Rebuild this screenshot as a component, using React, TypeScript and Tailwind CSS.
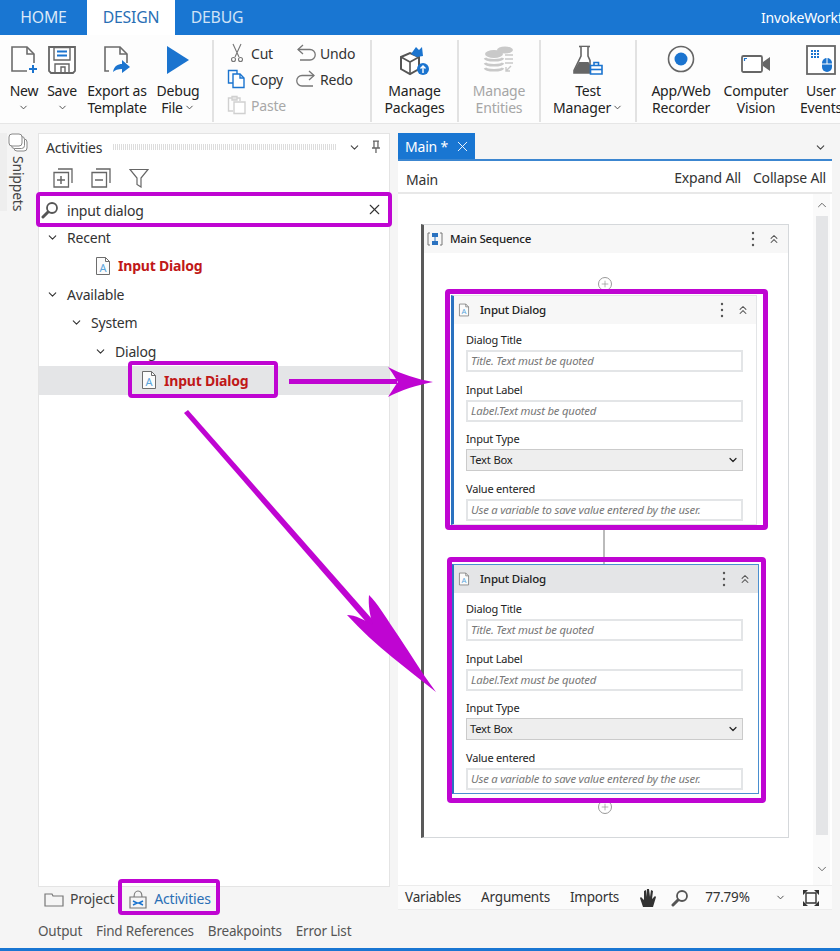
import React from 'react';
import { ChevronDown, ChevronUp, ChevronsUp, Plus, X } from 'lucide-react';

const MAGENTA = 'border-[#bf05d2]';

// Small magenta annotation frame that sits over whatever it is placed in
const Frame = ({ className }: { className: string }) => (
  <div className={`absolute border-solid ${MAGENTA} rounded-[4px] pointer-events-none z-20 ${className}`} />
);

const Chev = ({ className = '' }: { className?: string }) => (
  <ChevronDown className={`w-[11px] h-[11px] text-[#444] ${className}`} strokeWidth={2} />
);

const DocIcon = ({ size = 20 }: { size?: number }) => (
  <svg width={size} height={size} viewBox="0 0 20 20" fill="none">
    <path d="M3.5 1.5h9l4 4v13h-13z" fill="#fbfbfb" stroke="#6d6d6d" />
    <path d="M12.5 1.5v4h4" stroke="#6d6d6d" />
    <text x="10" y="15.5" textAnchor="middle" fontSize="11" fontFamily="Noto Sans" fill="#5aa5dc">A</text>
  </svg>
);

const NewIcon = () => (
  <svg width="30" height="30" viewBox="0 0 30 30" fill="none">
    <path d="M18 26H3V2h15l7 7v9" stroke="#6b6b6b" strokeWidth="1.6" />
    <path d="M18 2v7h7" stroke="#6b6b6b" strokeWidth="1.6" />
    <path d="M24 20v8M20 24h8" stroke="#1b74cf" strokeWidth="2" />
  </svg>
);

const SaveIcon = () => (
  <svg width="30" height="30" viewBox="0 0 30 30" fill="none">
    <path d="M2 2h26v24l-2 2H4l-2-2z" fill="#fff" stroke="#666" strokeWidth="1.8" />
    <path d="M7 2.5h16V15H7z" stroke="#666" strokeWidth="1.4" />
    <path d="M10 6.5h10M10 10.5h10" stroke="#1b74cf" strokeWidth="2" />
    <path d="M8 28v-9h14v9M14 22h4v6h-4z" stroke="#666" strokeWidth="1.4" />
  </svg>
);

const ExportIcon = () => (
  <svg width="30" height="30" viewBox="0 0 30 30" fill="none">
    <path d="M7 26H3V2h15l7 7v9" stroke="#6b6b6b" strokeWidth="1.6" />
    <path d="M18 2v7h7" stroke="#6b6b6b" strokeWidth="1.6" />
    <path d="M11 27c1-6 5-8 9-8v-4l8 7-8 6v-4c-4 0-7 1-9 3z" fill="#1b74cf" />
  </svg>
);

const ScissorsIcon = () => (
  <svg width="20" height="20" viewBox="0 0 20 20" fill="none" stroke="#777" strokeWidth="1.1">
    <path d="M6 1l6 13M14 1L8 14" />
    <circle cx="6.5" cy="16.5" r="2" />
    <circle cx="13.5" cy="16.5" r="2" />
  </svg>
);

const CopyIcon = () => (
  <svg width="20" height="20" viewBox="0 0 20 20" fill="none" stroke="#1b74cf" strokeWidth="1.4">
    <path d="M6 14H1.5V1.5H10V5" />
    <path d="M6 5h7l4 4v9.5H6z" fill="#fff" />
    <path d="M13 5v4h4" />
  </svg>
);

const PasteIcon = () => (
  <svg width="20" height="20" viewBox="0 0 20 20" fill="none" stroke="#d0d0d0" strokeWidth="1.4">
    <path d="M6 16H1.5V3H13v3" />
    <path d="M5 1.5h5V5H5z" fill="#e6e6e6" />
    <path d="M7 7h11v11.5H7z" fill="#fff" />
  </svg>
);

const UndoIcon = () => (
  <svg width="20" height="18" viewBox="0 0 20 18" fill="none" stroke="#777" strokeWidth="1.3">
    <path d="M7 1L2 5.5 7 10" />
    <path d="M2 5.5h12a4.5 4.5 0 0 1 0 10.5H4" />
  </svg>
);

const RedoIcon = () => (
  <svg width="20" height="18" viewBox="0 0 20 18" fill="none" stroke="#777" strokeWidth="1.3">
    <path d="M13 1l5 4.5-5 4.5" />
    <path d="M18 5.5H6a4.5 4.5 0 0 0 0 10.5h11" />
  </svg>
);

const PackagesIcon = () => (
  <svg width="32" height="32" viewBox="0 0 32 32" fill="none">
    <path d="M2 12l9-4 9 4v12l-9 5-9-5z" fill="#fff" stroke="#555" strokeWidth="2" />
    <path d="M2 12l9 5 9-5M11 17v12" stroke="#555" strokeWidth="1.6" />
    <path d="M12 9l5-7 3 3 3-3 1 9-6 1z" fill="#1b74cf" />
    <circle cx="24" cy="24" r="6" fill="#1b74cf" />
    <path d="M24 28v-7M21.5 23.5L24 21l2.5 2.5" stroke="#fff" strokeWidth="1.4" />
  </svg>
);

const EntitiesIcon = () => (
  <svg width="32" height="32" viewBox="0 0 32 32" fill="none">
    <ellipse cx="22" cy="5" rx="8" ry="3.5" fill="#c9c9c9" />
    <path d="M22 10h8M22 14h8M22 18h8" stroke="#c9c9c9" strokeWidth="1.6" />
    <ellipse cx="11" cy="9" rx="9" ry="4" fill="#c9c9c9" />
    <path d="M2 13c1 3 17 3 18 0M2 18c1 3 17 3 18 0M2 23c1 3 17 3 18 0" stroke="#c9c9c9" strokeWidth="2.6" />
    <path d="M28 21l-5 5M23 22v4h4" stroke="#c9c9c9" strokeWidth="1.4" />
  </svg>
);

const FlaskIcon = () => (
  <svg width="30" height="30" viewBox="0 0 30 30" fill="none">
    <path d="M6 1.5h11" stroke="#666" strokeWidth="1.6" />
    <path d="M8 2v9L1 25.5V28h16V15.5L15 11V2" stroke="#666" strokeWidth="1.6" fill="#fff" />
    <path d="M6 17h9.5L17 20v8H1v-2.500z" fill="#666" />
    <path d="M17.500 20.500h11.500V29H17.500zM21 20v-2.500h4.500V20" fill="#fff" stroke="#1b74cf" strokeWidth="1.6" />
    <path d="M18 24.500h11" stroke="#1b74cf" strokeWidth="1.6" />
  </svg>
);

const RecordIcon = () => (
  <svg width="28" height="28" viewBox="0 0 28 28" fill="none">
    <circle cx="14" cy="14" r="12.500" stroke="#666" strokeWidth="1.600" />
    <circle cx="14" cy="14" r="6.500" fill="#1b74cf" />
  </svg>
);

const CameraIcon = () => (
  <svg width="30" height="20" viewBox="0 0 30 20" fill="none" className="mt-[9px]">
    <rect x="1" y="2" width="20" height="16" rx="1.500" fill="#fff" stroke="#666" strokeWidth="1.800" />
    <path d="M3.500 7V4.500H6" stroke="#1b74cf" strokeWidth="1.200" />
    <path d="M22 8l7-5v14l-7-5z" fill="#666" />
  </svg>
);

const UserEventsIcon = () => (
  <svg width="30" height="30" viewBox="0 0 30 30" fill="none">
    <rect x="1" y="1" width="28" height="28" fill="#fff" stroke="#666" strokeWidth="1.800" />
    <path d="M5 6h9M5 9h9M5 12h9" stroke="#1b74cf" strokeWidth="2" strokeDasharray="2 1" />
    <rect x="16" y="13" width="10" height="14" rx="5" fill="#1b74cf" />
    <path d="M16 19h10M21 13v6" stroke="#fff" strokeWidth="1" />
  </svg>
);

const ExpandIcon = ({ minus = false }: { minus?: boolean }) => (
  <svg width="20" height="20" viewBox="0 0 20 20" fill="none" stroke="#666" strokeWidth="1.300">
    <path d="M5 1h14v14" />
    <path d="M1 4.500h14.500V19H1z" fill="#fff" />
    <path d="M4 12h8" strokeWidth="1.500" />
    {!minus && <path d="M8 8v8" strokeWidth="1.500" />}
  </svg>
);

const SearchIcon = ({ className = '' }: { className?: string }) => (
  <svg width="18" height="18" viewBox="0 0 18 18" fill="none" className={className}>
    <circle cx="11" cy="7" r="5" stroke="#555" strokeWidth="1.800" />
    <path d="M7 11l-5 5" stroke="#555" strokeWidth="3" strokeLinecap="round" />
  </svg>
);

const RibbonButton = ({
  icon,
  lines,
  width,
  muted,
  menu,
  menuInline,
}: {
  icon: React.ReactNode;
  lines: string[];
  width: string;
  muted?: boolean;
  menu?: boolean;
  menuInline?: boolean;
}) => (
  <div className={`flex flex-col items-center shrink-0 pt-[6px] ${width}`}>
    <div className="h-[41px] flex items-start justify-center pt-[4px]">{icon}</div>
    <div className={`text-[14px] leading-[17px] text-center tracking-[-0.2px] whitespace-nowrap ${muted ? 'text-[#a6a6a6]' : 'text-[#222]'}`}>
      {lines.map((line, i) => (
        <div key={line} className="flex items-center justify-center gap-px">
          {line}
          {menuInline && i === lines.length - 1 && <Chev />}
        </div>
      ))}
      {menu && (
        <div className="h-[17px] flex items-center justify-center">
          <Chev />
        </div>
      )}
    </div>
  </div>
);

const RibbonSep = () => <div className="w-[2px] h-[82px] mt-[5px] bg-[#e2e2e2] shrink-0" />;

const SmallAction = ({ icon, label, muted }: { icon: React.ReactNode; label: string; muted?: boolean }) => (
  <div className={`h-[26px] flex items-center gap-[4px] text-[14px] tracking-[-0.2px] ${muted ? 'text-[#a8a8a8]' : 'text-[#333]'}`}>
    <span className="w-[20px] flex justify-center">{icon}</span>
    {label}
  </div>
);

const Ribbon = () => (
  <div className="h-[89px] bg-[#fdfdfd] border-b border-[#e6e6e6] flex shrink-0 overflow-hidden pl-[5px]">
    <RibbonButton icon={<NewIcon />} lines={['New']} width="w-[38px]" menu />
    <RibbonButton icon={<SaveIcon />} lines={['Save']} width="w-[38px]" menu />
    <RibbonButton icon={<ExportIcon />} lines={['Export as', 'Template']} width="w-[72px]" />
    <RibbonButton
      icon={<svg width="24" height="30" viewBox="0 0 24 30"><path d="M1 1l22 14L1 29z" fill="#1b74cf" /></svg>}
      lines={['Debug', 'File']}
      width="w-[50px]"
      menuInline
    />
    <div className="w-[9px] shrink-0" />
    <RibbonSep />
    <div className="w-[156px] shrink-0 flex pl-[13px] pt-[5px]">
      <div className="w-[69px]">
        <SmallAction icon={<ScissorsIcon />} label="Cut" />
        <SmallAction icon={<CopyIcon />} label="Copy" />
        <SmallAction icon={<PasteIcon />} label="Paste" muted />
      </div>
      <div>
        <SmallAction icon={<UndoIcon />} label="Undo" />
        <SmallAction icon={<RedoIcon />} label="Redo" />
      </div>
    </div>
    <RibbonSep />
    <RibbonButton icon={<PackagesIcon />} lines={['Manage', 'Packages']} width="w-[85px]" />
    <RibbonSep />
    <RibbonButton icon={<EntitiesIcon />} lines={['Manage', 'Entities']} width="w-[80px]" muted />
    <RibbonSep />
    <RibbonButton icon={<FlaskIcon />} lines={['Test', 'Manager']} width="w-[94px]" menuInline />
    <RibbonSep />
    <RibbonButton icon={<RecordIcon />} lines={['App/Web', 'Recorder']} width="w-[88px]" />
    <RibbonButton icon={<CameraIcon />} lines={['Computer', 'Vision']} width="w-[62px]" />
    <RibbonButton icon={<UserEventsIcon />} lines={['User', 'Events']} width="w-[68px]" />
  </div>
);

const TreeRow = ({ indent, label }: { indent: string; label: string }) => (
  <div className={`h-[28.500px] flex items-center text-[14px] tracking-[-0.2px] text-[#333] ${indent}`}>
    <ChevronDown className="w-[13px] h-[13px] text-[#333] mr-[8px]" strokeWidth={2} />
    {label}
  </div>
);

const ActivitiesPanel = () => (
  <div className="w-[352px] h-[754px] bg-white border border-[#e4e4e4] shrink-0 flex flex-col">
    <div className="h-[26px] flex items-center pl-[7px] pr-[7px] text-[14px] tracking-[-0.2px] text-[#333]">
      Activities
      <div className="ml-[11px] w-[225px] h-[6px] bg-[repeating-linear-gradient(90deg,#dddddd_0_1px,transparent_1px_2px)]" />
      <Chev className="ml-[11px] w-[13px] h-[13px]" />
      <svg width="12" height="14" viewBox="0 0 12 14" fill="none" stroke="#666" strokeWidth="1.300" className="ml-[9px]">
        <path d="M3 1h6M4 1v7M8 1v7M2 8h8M6 8v5" />
      </svg>
    </div>
    <div className="h-[36px] flex items-center pl-[14px] gap-[18px]">
      <ExpandIcon />
      <ExpandIcon minus />
      <svg width="20" height="20" viewBox="0 0 20 20" fill="none" stroke="#666" strokeWidth="1.200">
        <path d="M1 1.500h18l-7 8.500v9l-4-2.500V10z" />
      </svg>
    </div>
    <div className="relative h-[27px] flex items-center pl-[28px] pr-[6px] text-[14px] tracking-[-0.2px] text-[#333]">
      <SearchIcon className="absolute left-[2px] top-[5px]" />
      <span className="mt-[2px]">input dialog</span>
      <X className="ml-auto w-[17px] h-[17px] text-[#333]" strokeWidth={1.500} />
      <Frame className="border-[4px] -inset-x-[3px] -inset-y-[4px]" />
    </div>
    <TreeRow indent="pl-[7px]" label="Recent" />
    <div className="h-[28.500px] flex items-center pl-[54px] gap-[5px]">
      <DocIcon />
      <span className="text-[14px] font-bold tracking-[-0.2px] text-[#c01818]">Input Dialog</span>
    </div>
    <TreeRow indent="pl-[7px]" label="Available" />
    <TreeRow indent="pl-[31px]" label="System" />
    <TreeRow indent="pl-[55px]" label="Dialog" />
    <div className="h-[29px] bg-[#e4e5e7] flex items-center pl-[100px]">
      <div className="relative flex items-center gap-[5px]">
        <DocIcon />
        <span className="text-[14px] font-bold tracking-[-0.2px] text-[#c01818]">Input Dialog</span>
        <Frame className="border-[4px] -left-[11px] -right-[30px] -top-[9px] -bottom-[7px]" />
      </div>
    </div>
  </div>
);

const Field = ({ label, placeholder }: { label: string; placeholder: string }) => (
  <div className="mb-[8.500px]">
    <div className="h-[18px] leading-[18px] text-[11px] tracking-[-0.2px] text-[#222]">{label}</div>
    <div className="mt-px h-[22px] leading-[18px] border-2 border-[#e3e5e7] pl-[3px] text-[11.300px] italic tracking-[-0.2px] text-[#777] bg-white whitespace-nowrap">
      {placeholder}
    </div>
  </div>
);

const TypeField = () => (
  <div className="mb-[8.500px]">
    <div className="h-[18px] leading-[18px] text-[11px] tracking-[-0.2px] text-[#222]">Input Type</div>
    <div className="mt-px h-[22px] border border-[#cbcbcb] bg-[#eeeeee] pl-[3px] pr-[3px] flex items-center justify-between text-[11.200px] tracking-[-0.2px] text-[#222]">
      Text Box
      <ChevronDown className="w-[12px] h-[12px] text-[#222]" strokeWidth={2.400} />
    </div>
  </div>
);

const Dots = () => (
  <svg width="4" height="16" viewBox="0 0 4 16" fill="#555">
    <circle cx="2" cy="2" r="1.200" />
    <circle cx="2" cy="8" r="1.200" />
    <circle cx="2" cy="14" r="1.200" />
  </svg>
);

const DialogCard = ({ selected, frame, className }: { selected?: boolean; frame: string; className: string }) => (
  <div
    className={`relative ${className} bg-white ${
      selected ? 'border border-[#4a8fd0] border-l-[2px] border-l-[#2a72c0]' : 'border border-[#e3e5e7] border-l-[3px] border-l-[#2a72c0]'
    }`}
  >
    <div className={`h-[28px] flex items-center pl-[3px] pr-[6px] ${selected ? 'bg-[#e4e5e7]' : 'bg-[#f7f7f7]'}`}>
      <DocIcon size={14} />
      <span className="ml-[9px] text-[11.500px] font-medium tracking-[-0.2px] text-[#222]">Input Dialog</span>
      <span className="ml-auto mr-[12px]"><Dots /></span>
      <ChevronsUp className="w-[14px] h-[14px] text-[#555]" strokeWidth={1.800} />
    </div>
    <div className={`pt-[7px] pl-[12px] -mb-[5px] ${selected ? 'pr-[15px]' : 'pr-[13px]'}`}>
      <Field label="Dialog Title" placeholder="Title. Text must be quoted" />
      <Field label="Input Label" placeholder="Label.Text must be quoted" />
      <TypeField />
      <Field label="Value entered" placeholder="Use a variable to save value entered by the user." />
    </div>
    <Frame className={`border-[5px] ${frame}`} />
  </div>
);

const AddDot = () => (
  <div className="w-[14px] h-[14px] rounded-full border border-[#999] flex items-center justify-center bg-white">
    <Plus className="w-[10px] h-[10px] text-[#888]" strokeWidth={1.500} />
  </div>
);

const Sequence = () => (
  <div className="ml-[23px] mt-[30px] w-[368px] h-[614px] border border-[#d5d8db] border-l-[3px] border-l-[#5a5a5a]">
    <div className="h-[28px] bg-[#f7f7f7] flex items-center pl-[3px] pr-[7px]">
      <svg width="16" height="16" viewBox="0 0 16 16" fill="none">
        <path d="M3 2H1v12h2M13 2h2v12h-2" stroke="#777" strokeWidth="1" />
        <path d="M5 2h6v4H5zM5 10h6v4H5z" fill="#2a72c0" />
        <path d="M8 6v4" stroke="#2a72c0" />
      </svg>
      <span className="ml-[7px] text-[11.500px] font-medium tracking-[-0.2px] text-[#222]">Main Sequence</span>
      <span className="ml-auto mr-[12px]"><Dots /></span>
      <ChevronsUp className="w-[14px] h-[14px] text-[#555]" strokeWidth={1.800} />
    </div>
    <div className="flex justify-center pt-[24px] pb-[4px] pr-[2px]"><AddDot /></div>
    <DialogCard className="ml-[27px] w-[306px]" frame="-left-[9px] -right-[12px] -top-[7px] -bottom-[6px]" />
    <div className="ml-[179px] w-[2px] h-[39px] bg-[#bbb]" />
    <DialogCard selected className="ml-[28px] w-[307px]" frame="-left-[7px] -right-[8px] -top-[8px] -bottom-[10px]" />
    <div className="flex justify-center pt-[6px] pr-[2px]"><AddDot /></div>
  </div>
);

const FitIcon = () => (
  <svg width="18" height="18" viewBox="0 0 18 18" fill="none">
    <path d="M1 1h5L1 6zM17 1h-5l5 5zM1 17h5l-5-5zM17 17h-5l5-5z" fill="#333" />
    <path d="M4 4h10v10H4z" stroke="#333" strokeWidth="1.400" />
  </svg>
);

const HandIcon = () => (
  <svg width="18" height="20" viewBox="0 0 18 20" fill="#333">
    <path d="M4 19L1 10l1-1 3 3V3l2-1v7l1-8h2l1 8 1-7 2 1-1 8 3-3 1 1-3 10z" />
  </svg>
);

const DocumentPanel = () => (
  <div className="w-[434px] h-[777px] flex flex-col shrink-0">
    <div className="h-[26px] flex">
      <div className="w-[77px] bg-[#1976d2] text-white flex items-center pl-[7px] text-[14px] tracking-[-0.2px]">
        Main *
        <X className="ml-[6px] w-[17px] h-[17px]" strokeWidth={1.300} />
      </div>
      <Chev className="ml-auto mr-[5px] mt-[8px] w-[13px] h-[13px]" />
    </div>
    <div className="h-[2px] bg-[#3c86d0]" />
    <div className="h-[33px] bg-white border-b-2 border-[#e8e8e8] flex items-center px-[8px] text-[14px] tracking-[-0.2px] text-[#333]">
      <span className="mt-[6px]">Main</span>
      <span className="ml-auto mt-[2px]">Expand All</span>
      <span className="ml-[12px] mr-[-2px] mt-[2px]">Collapse All</span>
    </div>
    <div className="h-[691px] bg-white flex">
      <div className="flex-1">
        <Sequence />
      </div>
      <div className="w-[17px] mr-[2px] bg-[#fafafa] flex flex-col items-center">
        <ChevronUp className="w-[14px] h-[14px] mt-[4px] text-[#555]" strokeWidth={1.500} />
        <div className="w-[12px] h-[619px] mt-[4px] bg-[#e4e5e7]" />
        <ChevronDown className="w-[14px] h-[14px] mt-[27px] text-[#555]" strokeWidth={1.500} />
      </div>
    </div>
    <div className="h-[25px] bg-[#fbfbfb] border-y border-[#ececec] flex items-center pl-[7px] text-[13.500px] tracking-[-0.2px] text-[#333]">
      <span>Variables</span>
      <span className="ml-[20px]">Arguments</span>
      <span className="ml-[20px]">Imports</span>
      <span className="ml-[20px]"><HandIcon /></span>
      <SearchIcon className="ml-[14px]" />
      <span className="ml-[16px]">77.79%</span>
      <Chev className="ml-[25px]" />
      <span className="ml-[16px]"><FitIcon /></span>
    </div>
  </div>
);

const Arrows = () => (
  <svg className="absolute inset-0 pointer-events-none z-30" width="840" height="951" viewBox="0 0 840 951" fill="#bf05d2">
    <path d="M289 379h108v5H289z" />
    <path d="M433 382c-16 3-32 8-45 15 6-9 9-14 10-15-1-1-4-7-10-15 13 7 29 12 45 15z" />
    <path d="M184 413l4-3 191 217-5 4z" />
    <path d="M436 692c-26-21-61-46-89-77 8 0 18 5 26 10-3-9-5-20-4-30 9 9 16 21 24 33 14 20 28 44 43 64z" />
  </svg>
);

export default function App() {
  return (
    <div className="relative w-[840px] h-[951px] overflow-hidden bg-[#f5f5f5] font-['Noto_Sans',sans-serif] flex flex-col">
      <div className="h-[35px] bg-[#1976d2] flex shrink-0 text-[15.800px] tracking-[-0.2px]">
        <div className="w-[87px] flex items-center justify-center text-[#dbe9f8]">HOME</div>
        <div className="w-[88px] flex items-center justify-center bg-white text-[#2a6fb5]">DESIGN</div>
        <div className="w-[84px] flex items-center justify-center text-[#cfe2f6]">DEBUG</div>
        <div className="ml-auto text-white text-[14px] self-center whitespace-nowrap w-[79px] overflow-hidden">InvokeWorkflow</div>
      </div>
      <Ribbon />

      <div className="flex pt-[9px] shrink-0">
        <div className="w-[38px] shrink-0 flex">
          <div className="w-[7px] h-[78px] bg-[#eeeeee]" />
          <div className="w-[22px] flex flex-col items-center">
            <svg width="20" height="20" viewBox="0 0 20 20" fill="#fff" stroke="#888" strokeWidth="1">
              <rect x="6" y="6" width="13" height="12" rx="3" />
              <rect x="3.500" y="3.500" width="13" height="12" rx="3" />
              <rect x="1" y="1" width="13" height="12" rx="3" />
            </svg>
            <span className="mt-[3px] text-[14px] tracking-[-0.2px] text-[#444] [writing-mode:vertical-rl]">Snippets</span>
          </div>
        </div>
        <div className="flex flex-col">
          <ActivitiesPanel />
          <div className="h-[23px] flex items-center pl-[6px] text-[14px] tracking-[-0.2px]">
            <svg width="20" height="16" viewBox="0 0 20 16" fill="none" stroke="#777" strokeWidth="1.200">
              <path d="M1 3h7l1 2h10v10H1z" />
            </svg>
            <span className="ml-[6px] text-[#444]">Project</span>
            <div className="relative ml-[15px] flex items-center">
              <svg width="18" height="20" viewBox="0 0 18 20" fill="none" stroke="#777" strokeWidth="1.200">
                <path d="M1 8h16v11H1zM5 8c0-8 8-8 8 0" />
                <path d="M4 12l4 2 2 0 4-2M4 16l4-2 2 0 4 2" stroke="#1b74cf" strokeWidth="1.400" />
              </svg>
              <span className="ml-[7px] text-[#2a6fb5]">Activities</span>
              <Frame className="border-[4px] -left-[11px] -right-[9px] -top-[9px] -bottom-[6px]" />
            </div>
          </div>
        </div>
        <div className="w-[8px] shrink-0" />
        <DocumentPanel />
      </div>

      <div className="flex pl-[38px] pt-[11px] gap-[14px] text-[13.500px] tracking-[-0.2px] text-[#555]">
        <span>Output</span>
        <span>Find References</span>
        <span>Breakpoints</span>
        <span>Error List</span>
      </div>
      <div className="absolute left-0 right-0 bottom-0 h-[3px] bg-[#1976d2]" />
      <Arrows />
    </div>
  );
}
